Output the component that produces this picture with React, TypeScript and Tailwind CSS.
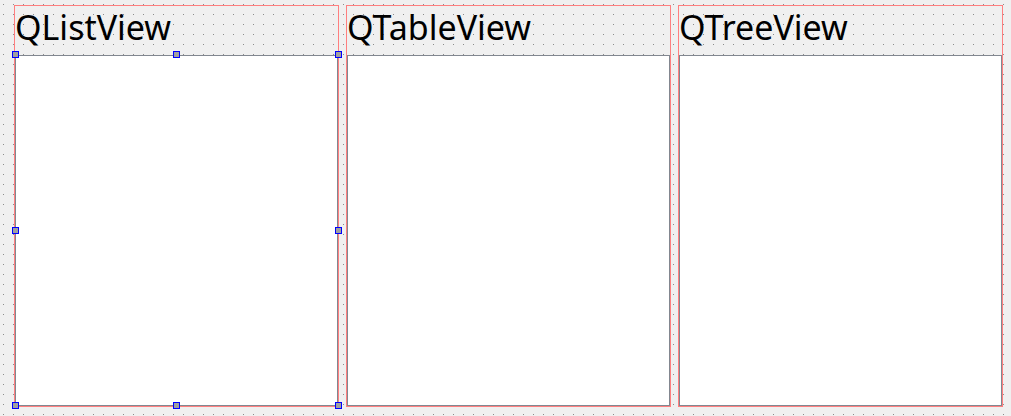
const COLUMNS = ["QListView", "QTableView", "QTreeView"];

// designer selection handles, offsets from the selected column's outer edge
const HANDLES = [
  "left-[-2px] top-[46px]",
  "left-[159px] top-[46px]",
  "left-[321px] top-[46px]",
  "left-[-2px] top-[222px]",
  "left-[321px] top-[222px]",
  "left-[-2px] top-[397px]",
  "left-[159px] top-[397px]",
  "left-[321px] top-[397px]",
];

function Column({ title, selected }: { title: string; selected?: boolean }) {
  return (
    <div className="relative w-[325px] h-[402px]">
      <div className="flex flex-col w-full h-full border border-[#ff7f7f]">
        <div
          className="h-[49px] shrink-0 leading-[42px] text-[34px] text-black whitespace-nowrap"
          style={{ fontFamily: '"Noto Sans", sans-serif' }}
        >
          {title}
        </div>
        <div className="flex-1 bg-white border border-[#828790]" />
      </div>
      {selected &&
        HANDLES.map((pos) => (
          <div key={pos} className={`absolute z-10 ${pos} w-[7px] h-[7px] p-px bg-[#0000ff]`}>
            <div className="w-full h-full bg-[#a0a0a0]" />
          </div>
        ))}
    </div>
  );
}

export default function App() {
  return (
    <div className="w-[1011px] h-[416px] pl-[14px] pt-[5px] flex gap-[7px] bg-[#f0f0f0] bg-[linear-gradient(90deg,#f0f0f0_9px,transparent_0),linear-gradient(#f0f0f0_9px,#8c8c8c_0)] bg-[size:10px_10px] bg-[position:4px_5px]">
      {COLUMNS.map((c, i) => (
        <Column key={c} title={c} selected={i === 0} />
      ))}
    </div>
  );
}
